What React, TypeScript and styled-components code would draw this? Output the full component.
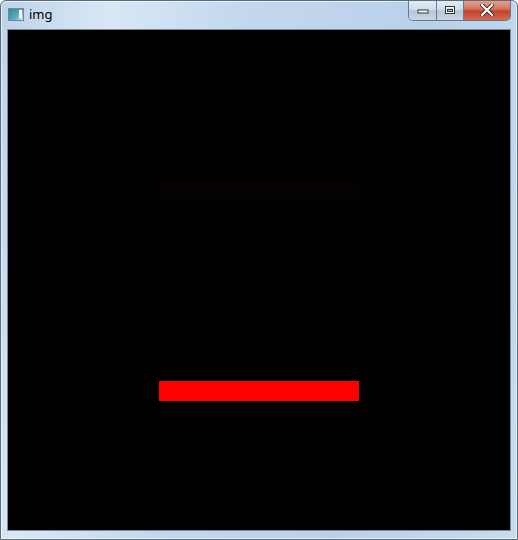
import React from "react";
import styled, { createGlobalStyle } from "styled-components";

const Global = createGlobalStyle`
  html, body { margin: 0; padding: 0; background: #fff; }
  body { width: 518px; height: 540px; overflow: hidden; font-family: "Segoe UI", "Noto Sans", "Open Sans", sans-serif; }
`;

const Window = styled.div`
  box-sizing: border-box;
  width: 518px;
  height: 540px;
  display: flex;
  flex-direction: column;
  border: 1px solid #5d6c7c;
  border-radius: 6px 6px 0 0;
  background: linear-gradient(100deg, #bcd3ea 0%, #d8e7f5 18%, #c3d8ee 40%, #b8d1ea 70%, #c6dbef 100%);
  box-shadow: inset 0 0 0 1px rgba(255,255,255,0.6);
  overflow: hidden;
`;

const TitleBar = styled.div`
  height: 28px;
  display: flex;
  align-items: flex-start;
  padding: 0 0 0 7px;
`;

const AppIcon = styled.div`
  margin-top: 7px;
  width: 14px;
  height: 11px;
  border: 1px solid #7a8590;
  background: linear-gradient(135deg, #2e8a8e 0%, #5ba8c8 60%, #dde8ee 100%);
  position: relative;
  &::after {
    content: "";
    position: absolute;
    right: 1px;
    top: 1px;
    width: 3px;
    height: 8px;
    background: #f4f6f8;
  }
`;

const Title = styled.div`
  margin-left: 5px;
  margin-top: 5px;
  font-size: 13px;
  line-height: 17px;
  color: #000;
`;

const Spacer = styled.div`
  flex: 1;
`;

const Buttons = styled.div`
  display: flex;
  margin-right: 6px;
  margin-top: -1px;
  border: 1px solid #6b7889;
  border-top: none;
  border-radius: 0 0 5px 5px;
  overflow: hidden;
  height: 20px;
`;

const CtlButton = styled.div<{ $w: number; $close?: boolean }>`
  width: ${(p) => p.$w}px;
  height: 20px;
  display: flex;
  align-items: center;
  justify-content: center;
  box-sizing: border-box;
  & + & { border-left: 1px solid #6b7889; }
  background: ${(p) =>
    p.$close
      ? "linear-gradient(#e4a593 0%, #d5735e 45%, #c0432a 55%, #d36a4f 100%)"
      : "linear-gradient(#e5edf6 0%, #d3dfec 45%, #b8c8da 55%, #c8d6e5 100%)"};
`;

const ClientFrame = styled.div`
  margin: 0 6px 0 6px;
  border: 1px solid #7d8a98;
  display: flex;
`;

const Canvas = styled.div`
  position: relative;
  width: 502px;
  height: 500px;
  background: #000;
`;

const Rect = styled.div<{ $color: string }>`
  position: absolute;
  width: 200px;
  height: 20px;
  background: ${(p) => p.$color};
`;

export default function App() {
  return (
    <>
      <Global />
      <Window>
        <TitleBar>
          <AppIcon />
          <Title>img</Title>
          <Spacer />
          <Buttons>
            <CtlButton $w={27}>
              <svg width="12" height="10" viewBox="0 0 12 10">
                <rect x="1" y="5" width="10" height="3" fill="#fff" stroke="#333" strokeWidth="1" />
              </svg>
            </CtlButton>
            <CtlButton $w={27}>
              <svg width="12" height="10" viewBox="0 0 12 10">
                <rect x="1.5" y="1.5" width="9" height="7" fill="none" stroke="#333" strokeWidth="1" />
                <rect x="2.5" y="2.5" width="7" height="5" fill="none" stroke="#fff" strokeWidth="1" />
                <rect x="3.5" y="4.5" width="5" height="2" fill="none" stroke="#333" strokeWidth="1" />
              </svg>
            </CtlButton>
            <CtlButton $w={47} $close>
              <svg width="14" height="12" viewBox="0 0 14 12">
                <path d="M2 1 L12 11 M12 1 L2 11" stroke="#3b2a26" strokeWidth="4" strokeLinecap="square" />
                <path d="M2 1 L12 11 M12 1 L2 11" stroke="#fff" strokeWidth="2.2" strokeLinecap="square" />
              </svg>
            </CtlButton>
          </Buttons>
        </TitleBar>
        <ClientFrame>
          <Canvas>
            <Rect $color="#060101" style={{ left: 151, top: 150 }} />
            <Rect $color="#ff0000" style={{ left: 151, top: 351 }} />
          </Canvas>
        </ClientFrame>
      </Window>
    </>
  );
}
